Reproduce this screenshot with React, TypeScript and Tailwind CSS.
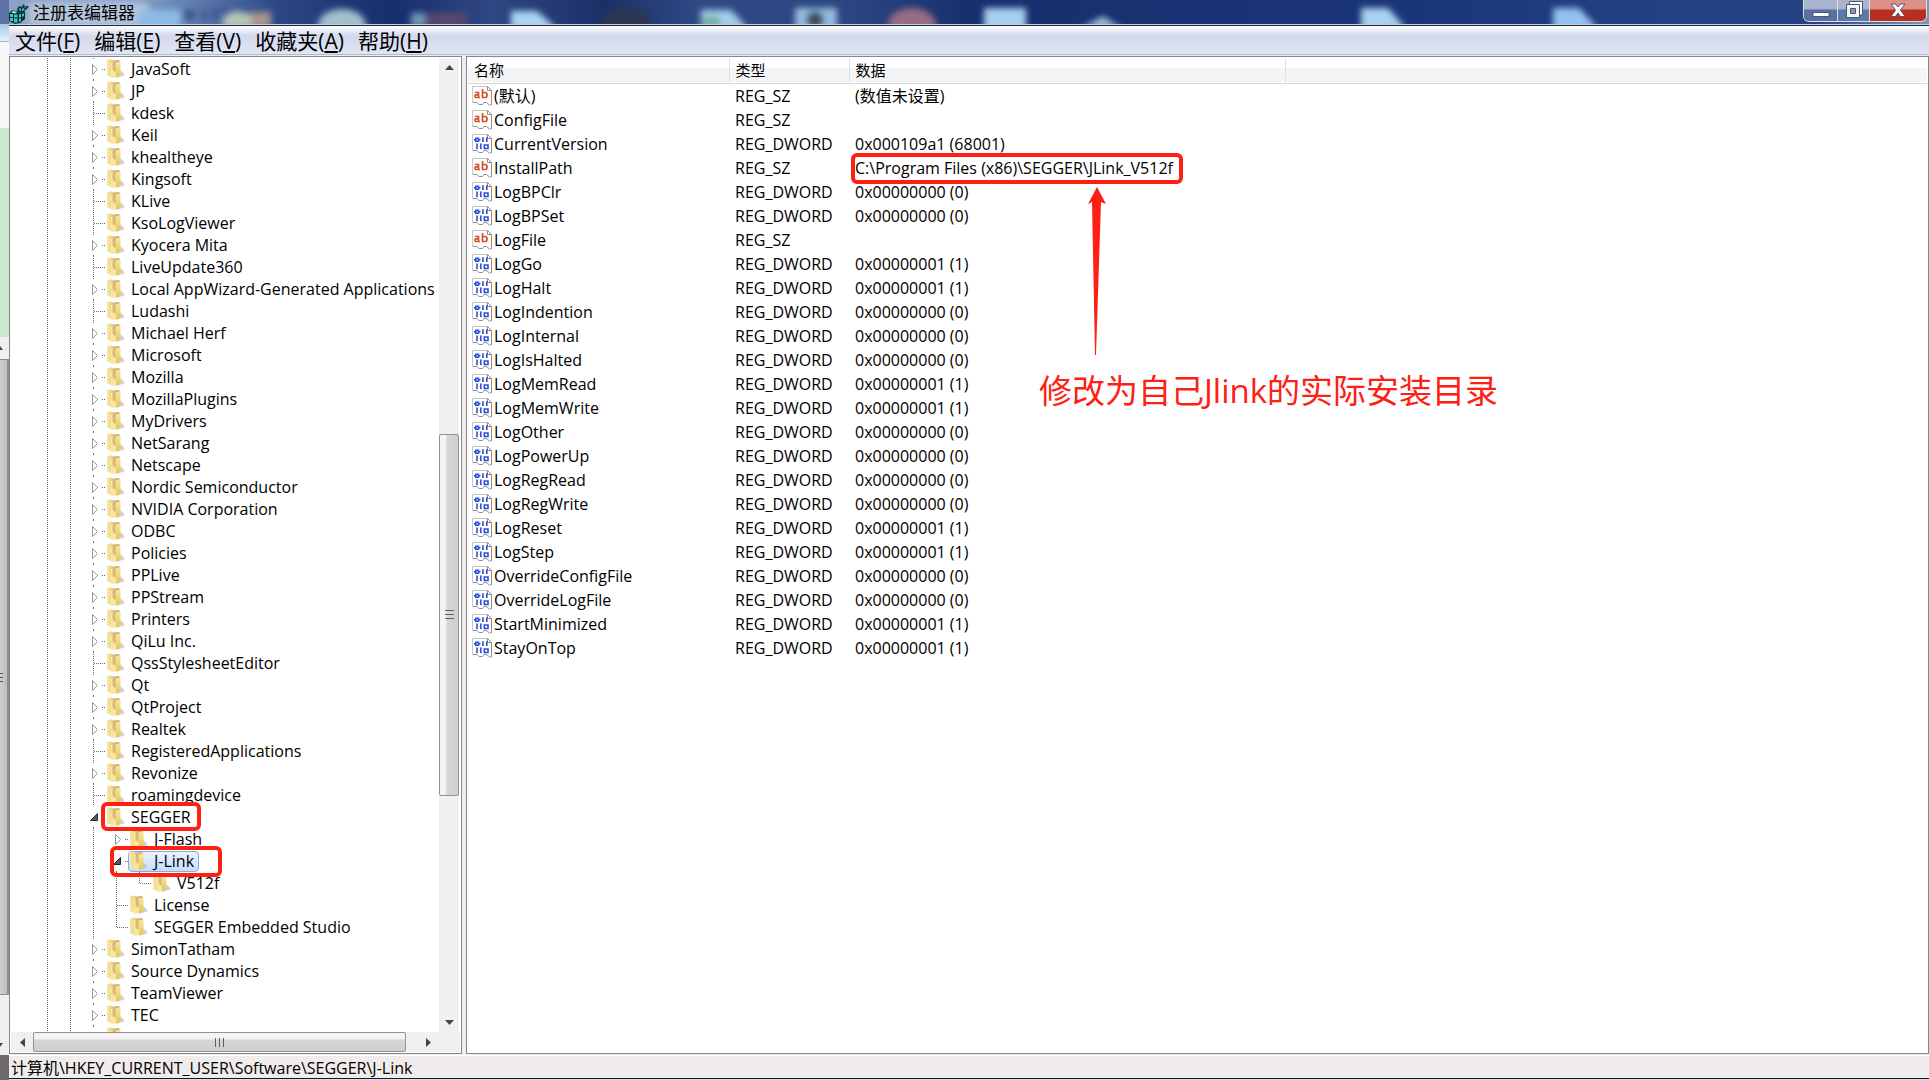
type Mark = 'closed' | 'open' | 'leaf' | 'last';

type TreeNode = { name: string; mark: Mark; guides?: boolean[]; selected?: boolean; box?: 'segger' | 'jlink' };

type RegValue = { name: string; type: 'REG_SZ' | 'REG_DWORD'; data: string };

const closed = (name: string): TreeNode => ({ name, mark: 'closed' });
const leaf = (name: string): TreeNode => ({ name, mark: 'leaf' });

const nodes: TreeNode[] = [
  closed('JavaSoft'),
  closed('JP'),
  leaf('kdesk'),
  closed('Keil'),
  closed('khealtheye'),
  closed('Kingsoft'),
  leaf('KLive'),
  leaf('KsoLogViewer'),
  closed('Kyocera Mita'),
  leaf('LiveUpdate360'),
  closed('Local AppWizard-Generated Applications'),
  leaf('Ludashi'),
  closed('Michael Herf'),
  closed('Microsoft'),
  closed('Mozilla'),
  closed('MozillaPlugins'),
  closed('MyDrivers'),
  closed('NetSarang'),
  closed('Netscape'),
  closed('Nordic Semiconductor'),
  closed('NVIDIA Corporation'),
  closed('ODBC'),
  closed('Policies'),
  closed('PPLive'),
  closed('PPStream'),
  closed('Printers'),
  closed('QiLu Inc.'),
  leaf('QssStylesheetEditor'),
  closed('Qt'),
  closed('QtProject'),
  closed('Realtek'),
  leaf('RegisteredApplications'),
  closed('Revonize'),
  leaf('roamingdevice'),
  { name: 'SEGGER', mark: 'open', box: 'segger' },
  { name: 'J-Flash', mark: 'closed', guides: [true] },
  { name: 'J-Link', mark: 'open', guides: [true], selected: true, box: 'jlink' },
  { name: 'V512f', mark: 'last', guides: [true, true] },
  { name: 'License', mark: 'leaf', guides: [true] },
  { name: 'SEGGER Embedded Studio', mark: 'last', guides: [true] },
  closed('SimonTatham'),
  closed('Source Dynamics'),
  closed('TeamViewer'),
  closed('TEC'),
  closed(''),
];

const dword = (name: string, n: 0 | 1): RegValue => ({ name, type: 'REG_DWORD', data: `0x0000000${n} (${n})` });

const values: RegValue[] = [
  { name: '(默认)', type: 'REG_SZ', data: '(数值未设置)' },
  { name: 'ConfigFile', type: 'REG_SZ', data: '' },
  { name: 'CurrentVersion', type: 'REG_DWORD', data: '0x000109a1 (68001)' },
  { name: 'InstallPath', type: 'REG_SZ', data: 'C:\\Program Files (x86)\\SEGGER\\JLink_V512f' },
  dword('LogBPClr', 0),
  dword('LogBPSet', 0),
  { name: 'LogFile', type: 'REG_SZ', data: '' },
  dword('LogGo', 1),
  dword('LogHalt', 1),
  dword('LogIndention', 0),
  dword('LogInternal', 0),
  dword('LogIsHalted', 0),
  dword('LogMemRead', 1),
  dword('LogMemWrite', 1),
  dword('LogOther', 0),
  dword('LogPowerUp', 0),
  dword('LogRegRead', 0),
  dword('LogRegWrite', 0),
  dword('LogReset', 1),
  dword('LogStep', 1),
  dword('OverrideConfigFile', 0),
  dword('OverrideLogFile', 0),
  dword('StartMinimized', 1),
  dword('StayOnTop', 1),
];

const menus = [
  ['文件', 'F'],
  ['编辑', 'E'],
  ['查看', 'V'],
  ['收藏夹', 'A'],
  ['帮助', 'H'],
];

function Guide() {
  return (
    <svg width="23" height="22" className="shrink-0" aria-hidden="true">
      <path d="M11.5 0V22" stroke="#6b6b6b" strokeDasharray="1 1" />
    </svg>
  );
}

function Connector({ mark }: { mark: Mark }) {
  return (
    <svg width="23" height="22" className="shrink-0" aria-hidden="true">
      {mark === 'leaf' && <path d="M11.5 0V22M12 11.5H23" stroke="#6b6b6b" strokeDasharray="1 1" />}
      {mark === 'last' && <path d="M11.5 0V12M12 11.5H23" stroke="#6b6b6b" strokeDasharray="1 1" />}
      {mark === 'closed' && (
        <>
          <path d="M11.5 0V1M11.5 21V22M20 11.5H21M22 11.5H23" stroke="#6b6b6b" />
          <path d="M10.5 6.5V16.5L15.5 11.5Z" fill="#fff" stroke="#979797" />
        </>
      )}
      {mark === 'open' && (
        <>
          <path d="M11.5 21V22M20 11.5H21M22 11.5H23" stroke="#6b6b6b" />
          <path d="M15.5 7.5V14.5H8.5Z" fill="#595959" stroke="#262626" />
        </>
      )}
    </svg>
  );
}

function FolderIcon() {
  return (
    <svg width="18" height="20" viewBox="0 0 18 20" className="shrink-0" aria-hidden="true">
      <path d="M9 19L17.5 16.5L16.5 14L13 11Z" fill="#bdbdbd" opacity=".7" />
      <path d="M0 1L5 .5V18L0 16.500Z" fill="url(#folderBack)" />
      <path d="M5 1.500L12.500 1V13L5 17.500Z" fill="url(#folderInner)" />
      <path d="M8.500 3.500L13.500 2.500V16.500L8.500 18.500Z" fill="url(#folderFront)" />
      <path d="M3.500 4L5.500 3V11L9 13V18L5 19L3.500 18Z" fill="#f6e6a0" />
    </svg>
  );
}

function ValueIcon({ type }: { type: RegValue['type'] }) {
  return (
    <svg width="20" height="20" viewBox="0 0 20 20" className="shrink-0" aria-hidden="true">
      <path d="M.5 .5H15.500L19.500 4.500V19.500H17.500L14.500 16.500H12L10.500 18.500H7L5 16.500H.5Z" fill="#fff" />
      <path d="M.5 16V.5H15.500" fill="none" stroke="#c8c8c8" />
      <path d="M.5 16.500H5L7 18.500H10.500L12 16.500H14.500L17.500 19H19.500V4.500H15.500V.5L19.500 4.500" fill="none" stroke="#8f8f8f" />
      {type === 'REG_SZ' ? (
        <g fill="none" stroke="#d9502b" strokeWidth="1.700">
          <path d="M3 6.500H6.500V11.500H8M6.500 8.800H4Q2.800 9 2.800 10.200Q2.900 11.500 4 11.500H6.500" />
          <path d="M10.500 3V11.500H13.500Q15 11.500 15 9Q15 6.500 13.500 6.500H10.500" />
        </g>
      ) : (
        <g fill="none" stroke="#2d50d8" strokeWidth="1.600">
          <path d="M3.800 4.300H6.500V7.200H3.800ZM2 5.700H3.500M7 5.700H8.500M11 3.200V8M14.800 3.200V8" />
          <path d="M5 9.500V15.300M8.800 9.500V15.300M12.300 11H16V14.500H12.300Z" />
        </g>
      )}
    </svg>
  );
}

function RegeditIcon() {
  return (
    <svg width="20" height="24" viewBox="0 0 20 24" className="shrink-0" aria-hidden="true">
      <path d="M0 12L3 9.500L9 10L10 12L16 11V18L11 22L6 23L0 20Z" fill="#0b2f35" />
      <path d="M1 13H4V16H1ZM5 13.500H8.500V16.500H5ZM1 17H4V20H1ZM5 17.500H8.500V21.500H5ZM10 13.500L12 12.500V16L10 17ZM10 18L12 17V20L10 21ZM13 13L15 12.500V15L13 16Z" fill="#3fc9bd" />
      <path d="M2 11.500L4.500 10L8.500 11L6 12.500Z" fill="#a5f1e6" />
      <path d="M8 8L10 5L13 6L14 3L16 5L20 5L18 8L16 9L15 12L12 13L9 11Z" fill="#0d3d42" />
      <path d="M10 7L12 8V10L10 9ZM13 8L15 7V9L13 10ZM15 5L17 6L16 7Z" fill="#43c9bd" />
    </svg>
  );
}

function Wallpaper() {
  return (
    <svg viewBox="0 0 1920 25" preserveAspectRatio="none" className="absolute inset-0 h-full w-full" aria-hidden="true">
      <defs>
        <linearGradient id="sky">
          <stop offset="0" stopColor="#8fa0c4" />
          <stop offset=".06" stopColor="#8ba6cb" />
          <stop offset=".11" stopColor="#4f6ca3" />
          <stop offset=".14" stopColor="#2c4783" />
          <stop offset=".2" stopColor="#162e6c" />
          <stop offset=".25" stopColor="#2f4783" />
          <stop offset=".31" stopColor="#1b3068" />
          <stop offset=".36" stopColor="#304a86" />
          <stop offset=".44" stopColor="#2c4580" />
          <stop offset=".5" stopColor="#172f6e" />
          <stop offset=".72" stopColor="#1a3577" />
          <stop offset=".86" stopColor="#234182" />
          <stop offset=".94" stopColor="#254283" />
          <stop offset="1" stopColor="#8495be" />
        </linearGradient>
        <filter id="haze" x="-20%" y="-100%" width="140%" height="300%">
          <feGaussianBlur stdDeviation="3" />
        </filter>
      </defs>
      <rect width="1920" height="25" fill="url(#sky)" />
      <g filter="url(#haze)">
        <rect x="20" y="3" width="120" height="22" fill="#c3d2e2" opacity=".75" />
        <rect x="130" y="10" width="42" height="18" fill="#8bbce6" />
        <path d="M174 10H186V20H174ZM192 10H198V20H192ZM204 8H210V20H204ZM214 8H220V18H214Z" fill="#3a568c" />
        <path d="M214 28V18L226 11L242 14V28Z" fill="#b5c8b4" />
        <path d="M242 28V12H262V28Z" fill="#a8948c" />
        <ellipse cx="333" cy="25" rx="24" ry="16" fill="#a3bfcb" />
        <rect x="402" y="13" width="14" height="14" fill="#6f96b4" />
        <rect x="416" y="13" width="42" height="14" fill="#55486d" />
        <path d="M502 11H528L544 25V30H502Z" fill="#a9d4f4" />
        <ellipse cx="617" cy="26" rx="26" ry="18" fill="#2e3450" />
        <path d="M692 10H722L736 25V30H692Z" fill="#a3cdea" />
        <ellipse cx="702" cy="22" rx="10" ry="6" fill="#70b39b" />
        <rect x="786" y="8" width="42" height="24" fill="#94bde0" />
        <ellipse cx="806" cy="20" rx="9" ry="9" fill="#3d4c5c" />
        <ellipse cx="903" cy="25" rx="24" ry="17" fill="#976c84" />
        <rect x="975" y="8" width="42" height="24" fill="#a6d0ee" />
        <path d="M1072 28L1094 16L1112 28Z" fill="#9ebcd4" />
        <path d="M1352 8H1379L1394 25V30H1352Z" fill="#a9d2f0" />
        <path d="M1544 8H1570L1586 25V30H1544Z" fill="#94c1ef" />
      </g>
    </svg>
  );
}

function Grip({ vertical = false }: { vertical?: boolean }) {
  return (
    <svg width="11" height="11" className={vertical ? 'rotate-90' : ''} aria-hidden="true">
      <path d="M1.500 1V10M5.500 1V10M9.500 1V10" stroke="#5e5e5e" />
    </svg>
  );
}

const arrows = { up: 'M0 6H9L4.500 1Z', down: 'M0 2H9L4.500 7Z', left: 'M6 0V9L1 4.500Z', right: 'M2 0V9L7 4.500Z' };

function ArrowButton({ dir }: { dir: keyof typeof arrows }) {
  return (
    <button type="button" aria-label={dir} className="flex size-5 shrink-0 items-center justify-center">
      <svg width="9" height="9" aria-hidden="true">
        <path d={arrows[dir]} fill="#454545" />
      </svg>
    </button>
  );
}

function TreeRow({ node }: { node: TreeNode }) {
  return (
    <li className="relative flex h-[22px] items-center whitespace-nowrap">
      <Guide />
      <Guide />
      {node.guides?.map((_, i) => <Guide key={i} />)}
      <Connector mark={node.mark} />
      <span
        className={
          node.selected
            ? 'flex h-[21px] items-center rounded-sm border border-[#84acdd] bg-linear-to-b from-[#e9f3fe] to-[#c5defc] pr-1 pl-px'
            : 'flex h-[21px] items-center pl-[2px]'
        }
      >
        <FolderIcon />
        <span className="pl-[6px]">{node.name}</span>
      </span>
      {node.box === 'segger' && (
        <span className="absolute -top-1 left-[65px] z-10 h-[29px] w-[100px] rounded-md border-4 border-[#fe2012]" />
      )}
      {node.box === 'jlink' && (
        <span className="absolute -top-1 left-[74px] z-10 h-[31px] w-[112px] rounded-md border-4 border-[#fe2012]" />
      )}
    </li>
  );
}

function InstallPathNote() {
  return (
    <>
      <span className="absolute -top-1 left-[-4px] h-[31px] w-[332px] rounded-md border-4 border-[#fe2012]" />
      <div className="absolute top-[30px] left-[184px] text-[#fe2012]">
        <svg width="20" height="170" className="ml-[48px]" aria-hidden="true">
          <path d="M10 0L19 17L14 15L9 168H8L5 15L1 17Z" fill="#fe2012" />
        </svg>
        <p className="mt-3 text-[33px] leading-[44px] whitespace-nowrap">修改为自己Jlink的实际安装目录</p>
      </div>
    </>
  );
}

export default function App() {
  return (
    <div className="flex h-screen overflow-hidden bg-white font-['Open_Sans','Noto_Sans_CJK_SC',sans-serif] text-base text-black">
      <svg width="0" height="0" className="absolute" aria-hidden="true">
        <defs>
          <linearGradient id="folderBack">
            <stop offset="0" stopColor="#f8e9ac" />
            <stop offset="1" stopColor="#ecd07a" />
          </linearGradient>
          <linearGradient id="folderInner">
            <stop offset="0" stopColor="#d9bd78" />
            <stop offset="1" stopColor="#cdb070" />
          </linearGradient>
          <linearGradient id="folderFront" x2="0" y2="1">
            <stop offset="0" stopColor="#f6e6a2" />
            <stop offset="1" stopColor="#e7c657" />
          </linearGradient>
        </defs>
      </svg>

      {/* edge of the window behind */}
      <div className="flex w-[9px] shrink-0 flex-col">
        <div className="h-6 bg-[#5d72a8]" />
        <div className="h-[17px] bg-linear-to-b from-[#a9c4e8] to-[#dff5fb]" />
        <div className="h-[87px] border-t border-[#9fb7c4] bg-[#f7f7f7]" />
        <div className="h-[209px] bg-[#cbe8cf]" />
        <div className="flex h-[22px] items-center bg-[#f0f0f0]">
          <svg width="4" height="4" aria-hidden="true">
            <path d="M0 0L3 4H0Z" fill="#454545" />
          </svg>
        </div>
        <div className="flex flex-1 items-center border-y border-r-2 border-[#8e8e8e] bg-linear-to-r from-[#cfcfd1] to-[#bdbdbf]">
          <svg width="4" height="11" aria-hidden="true">
            <path d="M0 1.500H3M0 5.500H3M0 9.500H3" stroke="#555" />
          </svg>
        </div>
        <div className="flex h-[60px] items-end bg-[#f0f0f0] pb-2">
          <svg width="4" height="4" aria-hidden="true">
            <path d="M0 0H3L0 4Z" fill="#454545" />
          </svg>
        </div>
        <div className="h-[25px] bg-[#6b6b6b]" />
      </div>

      <div className="flex min-w-0 flex-1 flex-col bg-[#f0eceb]">
        <header className="relative flex h-[26px] shrink-0 items-start justify-between border-b border-[#1b2545] bg-[#234182]">
          <Wallpaper />
          <div className="relative flex h-[26px] items-center gap-1">
            <RegeditIcon />
            <h1 className="text-[17px] leading-6">注册表编辑器</h1>
          </div>
          <div className="relative mr-[2px] flex h-[22px] overflow-hidden rounded-b-md border border-t-0 border-[#d8dfec] text-white">
            <button type="button" aria-label="最小化" className="flex w-[34px] justify-center border-r border-[#d8dfec] bg-linear-to-b from-[#a9b4cf] from-40% to-[#5a6f9f] to-50%">
              <svg width="18" height="20" aria-hidden="true">
                <rect x="1" y="12.500" width="16" height="4" fill="#fff" stroke="#4a5675" />
              </svg>
            </button>
            <button type="button" aria-label="还原" className="flex w-8 justify-center border-r border-[#d8dfec] bg-linear-to-b from-[#a9b4cf] from-40% to-[#5a7aa9] to-50%">
              <svg width="18" height="20" aria-hidden="true">
                <path d="M4.500 1.500H17.500V15H4.500Z" fill="#fff" stroke="#4a5675" />
                <path d="M1.500 4.500H14.500V17.500H1.500Z" fill="#f4f4f4" stroke="#4a5675" />
                <path d="M5.500 8.500H10.500V13.500H5.500Z" fill="#8497bb" stroke="#4a5675" />
              </svg>
            </button>
            <button type="button" aria-label="关闭" className="flex w-14 justify-center bg-linear-to-b from-[#dd9087] from-40% to-[#b92f1f] to-50%">
              <svg width="16" height="20" viewBox="0 0 16 20" aria-hidden="true">
                <path d="M1 4H5.500L8 7L10.500 4H15L10.500 10L15 16.500H10.500L8 13L5.500 16.500H1L5.500 10Z" fill="#fff" stroke="#58516a" />
              </svg>
            </button>
          </div>
          <div className="absolute inset-x-0 bottom-0 h-px bg-[#c3cce0]" />
        </header>

        <nav className="h-[29px] shrink-0 border-b border-[#b3b8cb] bg-linear-to-b from-white via-[#d3d9eb] via-35% to-[#e0e5f6]">
          <ul className="flex h-[30px] items-center gap-[14px] pl-[6px] text-[21px] leading-[30px]">
            {menus.map(([label, key]) => (
              <li key={key}>
                <button type="button" className="whitespace-nowrap">
                  {label}(<u className="underline-offset-2">{key}</u>)
                </button>
              </li>
            ))}
          </ul>
        </nav>

        <main className="mt-px flex min-h-0 flex-1 gap-1">
          <section className="flex w-[453px] shrink-0 flex-col border border-[#828790] bg-white p-px">
            <div className="flex min-h-0 flex-1 pr-px">
              <ul className="min-w-0 flex-1 overflow-hidden pl-[25px]">
                {nodes.map((n) => (
                  <TreeRow key={n.name} node={n} />
                ))}
              </ul>
              <div className="flex w-5 flex-col bg-[#f0f0f0]">
                <ArrowButton dir="up" />
                <div className="grow-356 basis-0" />
                <div className="flex grow-361 basis-0 items-center justify-center rounded-xs border border-[#929292] bg-linear-to-r from-[#f4f4f4] from-30% via-[#d5d6d8] via-40% to-[#cfcfd1]">
                  <Grip vertical />
                </div>
                <div className="grow-216 basis-0" />
                <ArrowButton dir="down" />
              </div>
            </div>
            <div className="flex h-5 shrink-0 bg-[#f0f0f0] pr-[22px] pl-[2px]">
              <ArrowButton dir="left" />
              <div className="flex grow-373 basis-0 items-center justify-center rounded-xs border border-[#929292] bg-linear-to-b from-[#f4f4f4] from-30% via-[#d5d6d8] via-40% to-[#cfcfd1]">
                <Grip />
              </div>
              <div className="grow-12 basis-0" />
              <ArrowButton dir="right" />
            </div>
          </section>

          <section className="min-w-0 flex-1 overflow-hidden border border-[#828790] bg-white p-px">
            <table className="w-full table-fixed border-collapse text-left whitespace-nowrap">
              <thead>
                <tr className="h-[25px] border-b border-[#d5d5d5] bg-linear-to-b from-white from-40% to-[#f3f4f6] to-45% text-[15px] leading-6">
                  <th className="w-[261px] border-r border-[#e0e0e2] pl-[6px] font-normal">名称</th>
                  <th className="w-[120px] border-r border-[#e0e0e2] pl-[6px] font-normal">类型</th>
                  <th className="w-[436px] border-r border-[#e0e0e2] pl-[6px] font-normal">数据</th>
                  <th />
                </tr>
              </thead>
              <tbody>
                <tr className="h-px" />
                {values.map((v) => (
                  <tr key={v.name} className="h-6 leading-6">
                    <td className="pl-1">
                      <span className="flex items-center gap-[2px]">
                        <ValueIcon type={v.type} />
                        {v.name}
                      </span>
                    </td>
                    <td className="pl-[6px]">{v.type}</td>
                    <td className="pl-[6px]">
                      <span className="relative">
                        {v.data}
                        {v.name === 'InstallPath' && <InstallPathNote />}
                      </span>
                    </td>
                    <td />
                  </tr>
                ))}
              </tbody>
            </table>
          </section>
        </main>

        <footer className="mt-px h-[23px] shrink-0 border-t border-white pl-[2px] leading-6">
          计算机\HKEY_CURRENT_USER\Software\SEGGER\J-Link
        </footer>
        <div className="h-[2px] shrink-0 border-t border-[#15171f] bg-[#d5deee]" />
      </div>
    </div>
  );
}
